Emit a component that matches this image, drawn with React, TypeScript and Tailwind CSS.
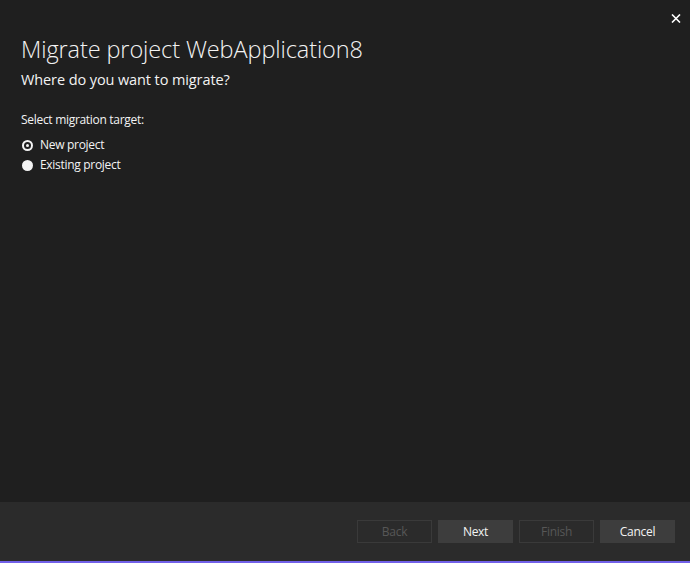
import React from "react";

function Radio({ checked }: { checked?: boolean }) {
  return (
    <span className="w-[11px] h-[11px] rounded-full bg-[#f3f3f3] flex items-center justify-center shrink-0">
      {checked && (
        <span className="w-[7px] h-[7px] rounded-full bg-[#1f1f1f] flex items-center justify-center">
          <span className="w-[3px] h-[3px] rounded-full bg-[#f3f3f3]" />
        </span>
      )}
    </span>
  );
}

function Btn({ label, disabled }: { label: string; disabled?: boolean }) {
  return (
    <button
      className={
        disabled
          ? "w-[75px] h-[23px] border border-[#3a3a3a] bg-transparent text-[#575757] text-[12px] leading-none tracking-[-0.3px]"
          : "w-[75px] h-[23px] border border-[#3d3d3d] bg-[#3d3d3d] text-[#f3f3f3] text-[12px] leading-none tracking-[-0.3px]"
      }
    >
      {label}
    </button>
  );
}

export default function App() {
  return (
    <div
      className="w-[690px] h-[563px] bg-[#1f1f1f] flex flex-col text-[#f3f3f3]"
      style={{ fontFamily: '"Open Sans", "Noto Sans", sans-serif' }}
    >
      <div className="flex-1 flex flex-col relative px-[21px]">
        <button className="absolute right-[8px] top-[13px] w-[12px] h-[11px] flex items-center justify-center">
          <svg width="10" height="9" viewBox="0 0 10 9">
            <path d="M1 0.5L9 8.5M9 0.5L1 8.5" stroke="#ffffff" strokeWidth="1.6" />
          </svg>
        </button>
        <h1 className="mt-[33px] text-[23.5px] leading-[32px] font-light tracking-[-0.1px]">
          Migrate project WebApplication8
        </h1>
        <div className="mt-[5px] text-[14.5px] leading-[20px] tracking-[-0.1px]">
          Where do you want to migrate?
        </div>
        <div className="mt-[22px] text-[12px] leading-[16px] tracking-[-0.3px]">Select migration target:</div>
        <div className="mt-[9px] flex flex-col gap-[4px] text-[12px] tracking-[-0.3px]">
          <label className="flex items-center gap-[7px] h-[16px] pl-[1px]">
            <Radio checked />
            <span>New project</span>
          </label>
          <label className="flex items-center gap-[7px] h-[16px] pl-[1px]">
            <Radio />
            <span>Existing project</span>
          </label>
        </div>
      </div>
      <div className="h-[59px] bg-[#2b2b2b] flex items-center justify-end gap-[6px] pr-[15px]">
        <Btn label="Back" disabled />
        <Btn label="Next" />
        <Btn label="Finish" disabled />
        <Btn label="Cancel" />
      </div>
      <div className="h-[2px] bg-[#7160e8]" />
    </div>
  );
}
